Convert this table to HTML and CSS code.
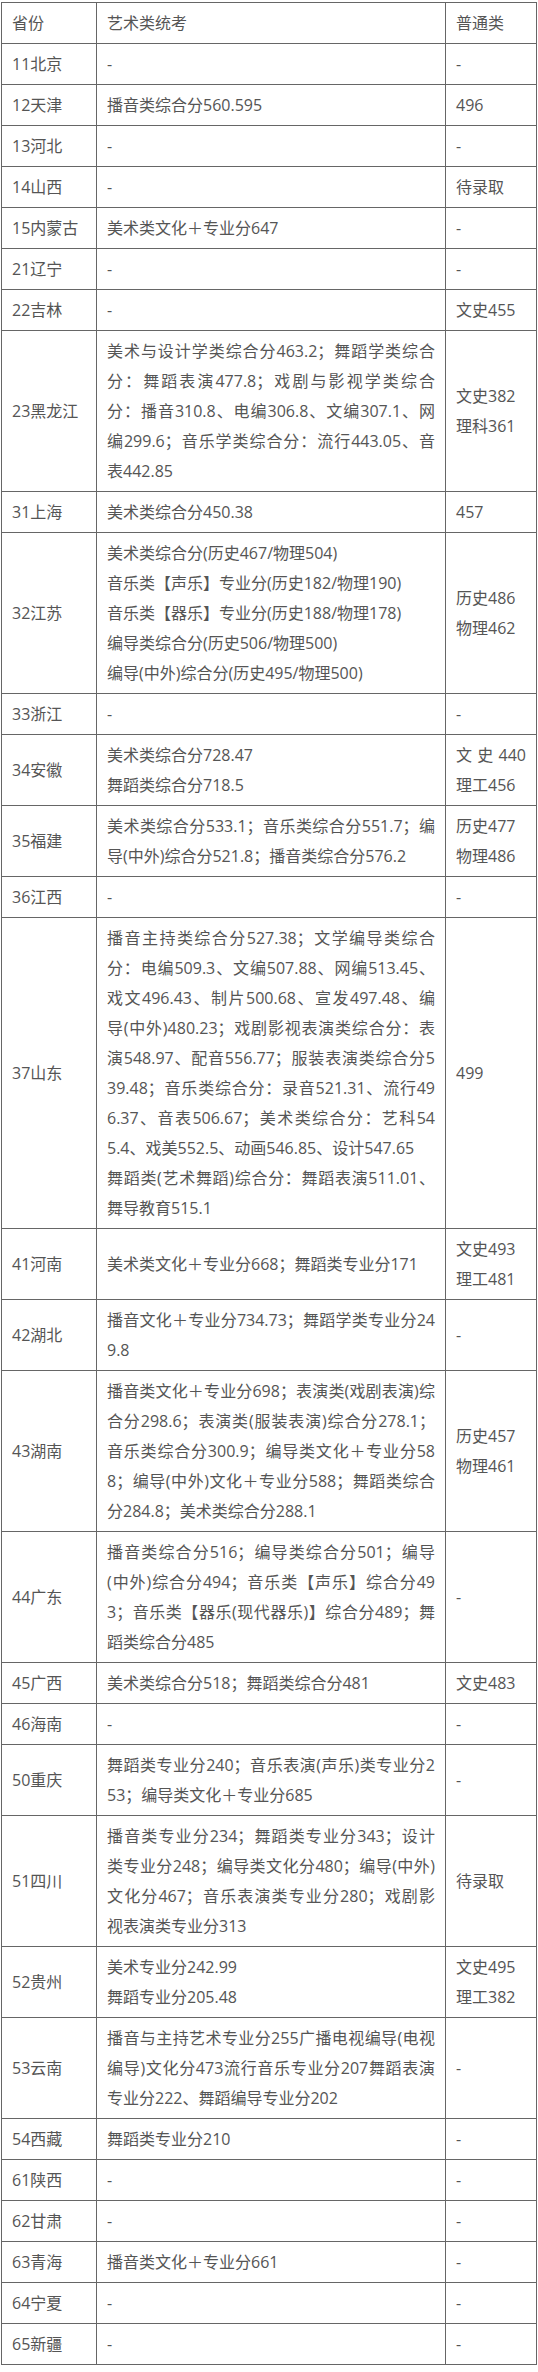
FILE: index.html
```html
<!DOCTYPE html>
<html lang="zh-CN">
<head>
<meta charset="utf-8">
<title>艺术类录取分数</title>
<link rel="stylesheet" href="styles.css">
</head>
<body>
<div class="wrap">
<table class="score-table">
<colgroup>
<col class="col-prov">
<col class="col-art">
<col class="col-gen">
</colgroup>
<tbody>
<tr><td>省份</td><td>艺术类统考</td><td>普通类</td></tr>
<tr><td>11北京</td><td>-</td><td>-</td></tr>
<tr><td>12天津</td><td>播音类综合分560.595</td><td>496</td></tr>
<tr><td>13河北</td><td>-</td><td>-</td></tr>
<tr><td>14山西</td><td>-</td><td>待录取</td></tr>
<tr><td>15内蒙古</td><td>美术类文化＋专业分647</td><td>-</td></tr>
<tr><td>21辽宁</td><td>-</td><td>-</td></tr>
<tr><td>22吉林</td><td>-</td><td>文史455</td></tr>
<tr>
  <td>23黑龙江</td>
  <td>
    <span class="ln j">美术与设计学类综合分463.2；舞蹈学类综合</span>
    <span class="ln j">分：舞蹈表演477.8；戏剧与影视学类综合</span>
    <span class="ln j">分：播音310.8、电编306.8、文编307.1、网</span>
    <span class="ln j">编299.6；音乐学类综合分：流行443.05、音</span>
    <span class="ln">表442.85</span>
  </td>
  <td><span class="ln">文史382</span><span class="ln">理科361</span></td>
</tr>
<tr><td>31上海</td><td>美术类综合分450.38</td><td>457</td></tr>
<tr>
  <td>32江苏</td>
  <td>
    <span class="ln">美术类综合分(历史467/物理504)</span>
    <span class="ln">音乐类【声乐】专业分(历史182/物理190)</span>
    <span class="ln">音乐类【器乐】专业分(历史188/物理178)</span>
    <span class="ln">编导类综合分(历史506/物理500)</span>
    <span class="ln">编导(中外)综合分(历史495/物理500)</span>
  </td>
  <td><span class="ln">历史486</span><span class="ln">物理462</span></td>
</tr>
<tr><td>33浙江</td><td>-</td><td>-</td></tr>
<tr>
  <td>34安徽</td>
  <td><span class="ln">美术类综合分728.47</span><span class="ln">舞蹈类综合分718.5</span></td>
  <td><span class="ln j">文史440</span><span class="ln">理工456</span></td>
</tr>
<tr>
  <td>35福建</td>
  <td>
    <span class="ln j">美术类综合分533.1；音乐类综合分551.7；编</span>
    <span class="ln">导(中外)综合分521.8；播音类综合分576.2</span>
  </td>
  <td><span class="ln">历史477</span><span class="ln">物理486</span></td>
</tr>
<tr><td>36江西</td><td>-</td><td>-</td></tr>
<tr>
  <td>37山东</td>
  <td>
    <span class="ln j">播音主持类综合分527.38；文学编导类综合</span>
    <span class="ln j">分：电编509.3、文编507.88、网编513.45、</span>
    <span class="ln j">戏文496.43、制片500.68、宣发497.48、编</span>
    <span class="ln j">导(中外)480.23；戏剧影视表演类综合分：表</span>
    <span class="ln j">演548.97、配音556.77；服装表演类综合分5</span>
    <span class="ln j">39.48；音乐类综合分：录音521.31、流行49</span>
    <span class="ln j">6.37、音表506.67；美术类综合分：艺科54</span>
    <span class="ln">5.4、戏美552.5、动画546.85、设计547.65</span>
    <span class="ln j">舞蹈类(艺术舞蹈)综合分：舞蹈表演511.01、</span>
    <span class="ln">舞导教育515.1</span>
  </td>
  <td>499</td>
</tr>
<tr>
  <td>41河南</td>
  <td>美术类文化＋专业分668；舞蹈类专业分171</td>
  <td><span class="ln">文史493</span><span class="ln">理工481</span></td>
</tr>
<tr>
  <td>42湖北</td>
  <td>
    <span class="ln j">播音文化＋专业分734.73；舞蹈学类专业分24</span>
    <span class="ln">9.8</span>
  </td>
  <td>-</td>
</tr>
<tr>
  <td>43湖南</td>
  <td>
    <span class="ln j">播音类文化＋专业分698；表演类(戏剧表演)综</span>
    <span class="ln j">合分298.6；表演类(服装表演)综合分278.1；</span>
    <span class="ln j">音乐类综合分300.9；编导类文化＋专业分58</span>
    <span class="ln j">8；编导(中外)文化＋专业分588；舞蹈类综合</span>
    <span class="ln">分284.8；美术类综合分288.1</span>
  </td>
  <td><span class="ln">历史457</span><span class="ln">物理461</span></td>
</tr>
<tr>
  <td>44广东</td>
  <td>
    <span class="ln j">播音类综合分516；编导类综合分501；编导</span>
    <span class="ln j">(中外)综合分494；音乐类【声乐】综合分49</span>
    <span class="ln j">3；音乐类【器乐(现代器乐)】综合分489；舞</span>
    <span class="ln">蹈类综合分485</span>
  </td>
  <td>-</td>
</tr>
<tr><td>45广西</td><td>美术类综合分518；舞蹈类综合分481</td><td>文史483</td></tr>
<tr><td>46海南</td><td>-</td><td>-</td></tr>
<tr>
  <td>50重庆</td>
  <td>
    <span class="ln j">舞蹈类专业分240；音乐表演(声乐)类专业分2</span>
    <span class="ln">53；编导类文化＋专业分685</span>
  </td>
  <td>-</td>
</tr>
<tr>
  <td>51四川</td>
  <td>
    <span class="ln j">播音类专业分234；舞蹈类专业分343；设计</span>
    <span class="ln j">类专业分248；编导类文化分480；编导(中外)</span>
    <span class="ln j">文化分467；音乐表演类专业分280；戏剧影</span>
    <span class="ln">视表演类专业分313</span>
  </td>
  <td>待录取</td>
</tr>
<tr>
  <td>52贵州</td>
  <td><span class="ln">美术专业分242.99</span><span class="ln">舞蹈专业分205.48</span></td>
  <td><span class="ln">文史495</span><span class="ln">理工382</span></td>
</tr>
<tr>
  <td>53云南</td>
  <td>
    <span class="ln j">播音与主持艺术专业分255广播电视编导(电视</span>
    <span class="ln j">编导)文化分473流行音乐专业分207舞蹈表演</span>
    <span class="ln">专业分222、舞蹈编导专业分202</span>
  </td>
  <td>-</td>
</tr>
<tr><td>54西藏</td><td>舞蹈类专业分210</td><td>-</td></tr>
<tr><td>61陕西</td><td>-</td><td>-</td></tr>
<tr><td>62甘肃</td><td>-</td><td>-</td></tr>
<tr><td>63青海</td><td>播音类文化＋专业分661</td><td>-</td></tr>
<tr><td>64宁夏</td><td>-</td><td>-</td></tr>
<tr><td>65新疆</td><td>-</td><td>-</td></tr>
</tbody>
</table>
</div>
</body>
</html>
```

FILE: styles.css
```css
html, body {
  margin: 0;
  padding: 0;
  background: #ffffff;
}

.wrap {
  padding: 2px 0 0 1px;
}

.score-table {
  border-collapse: collapse;
  table-layout: fixed;
  width: 535px;
  font-family: "Open Sans", "Noto Sans CJK SC", sans-serif;
  font-size: 16px;
  line-height: 30px;
  color: #555555;
  text-spacing-trim: space-all;
}

.col-prov { width: 95px; }
.col-art { width: 349px; }
.col-gen { width: 91px; }

.score-table td {
  border: 1px solid #666666;
  padding: 5px 10px;
  vertical-align: middle;
  text-align: left;
  word-break: break-all;
}

.ln {
  display: block;
}

.ln.j {
  text-align: justify;
  text-align-last: justify;
}
```
